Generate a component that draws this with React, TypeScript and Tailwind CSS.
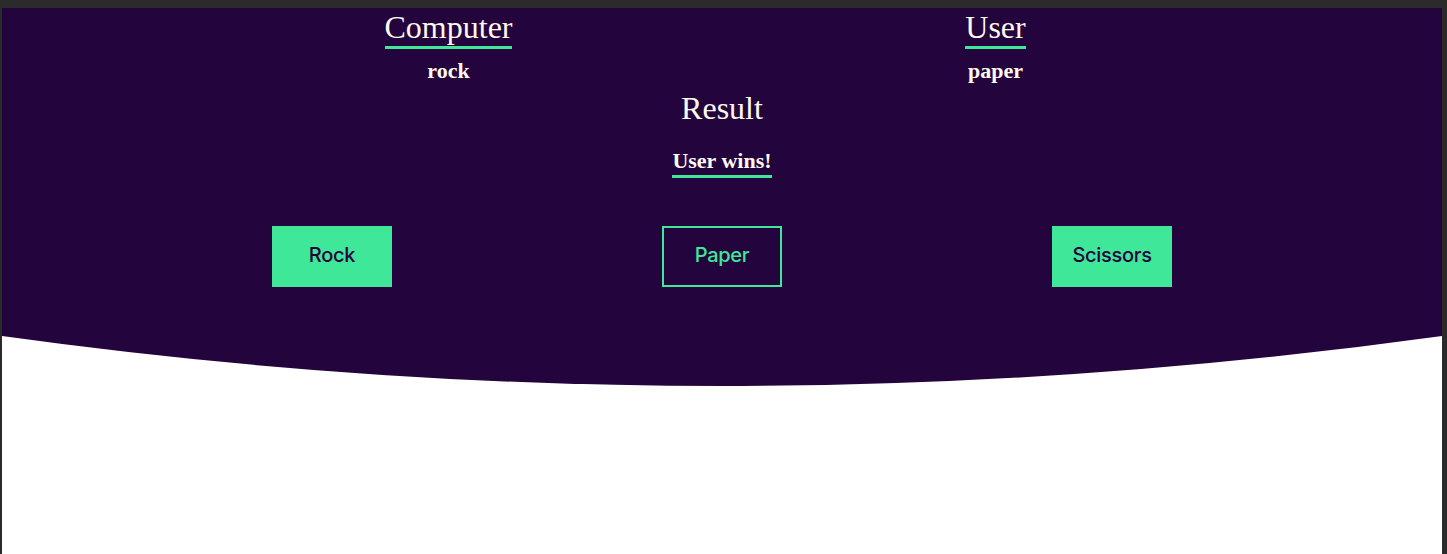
import React from "react";

const CHOICES = ["Rock", "Paper", "Scissors"];

const serif = "font-['Liberation_Serif',serif]";

const App: React.FC = () => {
  const selected = "Paper";

  return (
    <div className="h-[554px] bg-[#2b2b2b] pt-2 pl-[2px] pr-[5px]">
      <div className="h-full overflow-hidden bg-white">
        <section className={`bg-[#24043d] h-[328px] text-[#fffaf0] ${serif}`}>
          <div className="mx-auto grid w-[1094px] grid-cols-2">
            <div className="flex flex-col items-center">
              <h2 className="border-b-[3px] border-[#3fe899] text-[32px] leading-[38px]">
                Computer
              </h2>
              <p className="mt-[10px] text-[22px] font-bold leading-[24px]">rock</p>
            </div>
            <div className="flex flex-col items-center">
              <h2 className="border-b-[3px] border-[#3fe899] text-[32px] leading-[38px]">
                User
              </h2>
              <p className="mt-[10px] text-[22px] font-bold leading-[24px]">paper</p>
            </div>
          </div>

          <div className="mt-[6px] flex flex-col items-center">
            <h2 className="text-[32px] leading-[38px]">Result</h2>
            <p className="mt-[20px] border-b-[3px] border-[#3fe899] text-[22px] font-bold leading-[28px]">
              User wins!
            </p>
          </div>

          <div className="mx-auto mt-[48px] flex w-[1170px] justify-around font-['Inter',sans-serif]">
            {CHOICES.map((choice) =>
              choice === selected ? (
                <button
                  key={choice}
                  className="h-[61px] w-[120px] border-2 border-[#3fe899] pb-[3px] text-[20px] font-medium tracking-[-0.3px] text-[#3fe899]"
                >
                  {choice}
                </button>
              ) : (
                <button
                  key={choice}
                  className="h-[61px] w-[120px] bg-[#3fe899] pb-[3px] text-[20px] font-medium tracking-[-0.3px] text-[#24043d]"
                >
                  {choice}
                </button>
              )
            )}
          </div>
        </section>

        <svg
          className="block h-[50px] w-full"
          viewBox="0 0 1440 50"
          preserveAspectRatio="none"
        >
          <path d="M0 0 H1440 Q720 100 0 0 Z" fill="#24043d" />
        </svg>
      </div>
    </div>
  );
};

export default App;
